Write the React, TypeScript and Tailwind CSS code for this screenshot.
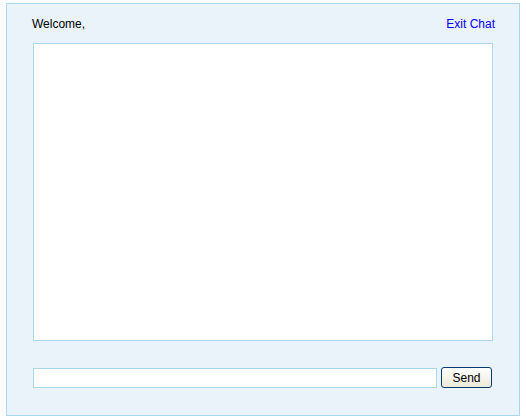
export default function App() {
  return (
    <div className="min-h-[420px] bg-white pl-[6px] pt-[3px] font-['Liberation_Sans',Arial,sans-serif] text-[12px] leading-[14px]">
      <div className="flex h-[413px] w-[514px] flex-col border border-[#a8d8ec] bg-[#eaf2fa] px-[26px]">
        <div className="flex h-[39px] items-start justify-between pt-[13px]">
          <span className="-ml-px text-black">Welcome,</span>
          <a href="#" className="-mr-[2px] text-[#0000ff]">
            Exit Chat
          </a>
        </div>
        <div className="h-[298px] w-[460px] border border-[#a8d8ec] bg-white" />
        <div className="mt-[26px] flex h-[21px] items-end gap-[4px]">
          <input
            type="text"
            className="h-[20px] w-[404px] border border-[#a8d8ec] bg-white px-1 text-[12px] outline-none"
          />
          <button
            type="button"
            className="h-[21px] w-[51px] rounded-[3px] border border-[#003c74] bg-gradient-to-b from-white to-[#ece9d8] text-[12px] text-black"
          >
            Send
          </button>
        </div>
      </div>
    </div>
  );
}
